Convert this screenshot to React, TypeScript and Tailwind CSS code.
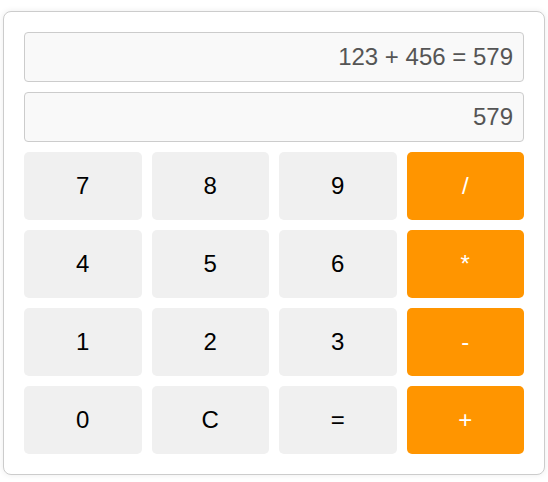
import React, { useState } from "react"

const keys = [
  "7", "8", "9", "/",
  "4", "5", "6", "*",
  "1", "2", "3", "-",
  "0", "C", "=", "+",
]

const isOp = (k: string) => ["/", "*", "-", "+"].includes(k)

export default function App() {
  const [expr] = useState("123 + 456 = 579")
  const [result] = useState("579")

  return (
    <div className="min-h-screen bg-white pt-[11px]" style={{ fontFamily: '"Liberation Sans", Arial, sans-serif' }}>
      <div className="mx-auto w-[542px] rounded-lg border border-[#cccccc] bg-white p-5 shadow-[0_0_6px_rgba(0,0,0,0.08)]">
        <div className="flex flex-col gap-[10px]">
          <input
            readOnly
            value={expr}
            className="h-[50px] w-full rounded border border-[#cccccc] bg-[#f9f9f9] px-[10px] text-right text-2xl text-[#555555] outline-none"
          />
          <input
            readOnly
            value={result}
            className="h-[50px] w-full rounded border border-[#cccccc] bg-[#f9f9f9] px-[10px] text-right text-2xl text-[#555555] outline-none"
          />
          <div className="grid grid-cols-4 gap-[10px]">
            {keys.map((k) => (
              <button
                key={k}
                className={`h-[68px] rounded-[5px] text-2xl ${
                  isOp(k) ? "bg-[#ff9500] text-white" : "bg-[#f0f0f0] text-black"
                }`}
              >
                {k}
              </button>
            ))}
          </div>
        </div>
      </div>
    </div>
  )
}
